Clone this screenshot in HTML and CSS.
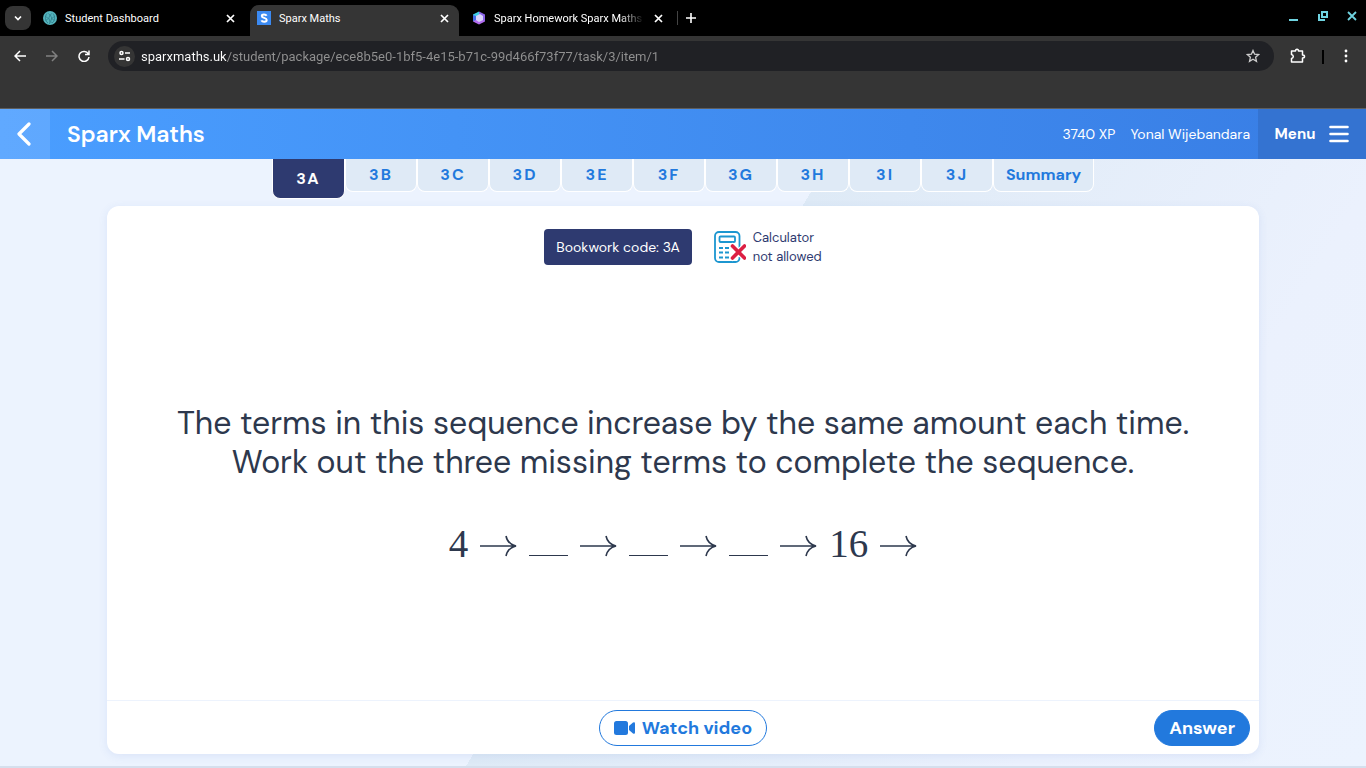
FILE: index.html
```html
<!DOCTYPE html>
<html lang="en">
<head>
    <meta charset="utf-8">
    <title>Sparx Maths</title>
    <link rel="stylesheet" href="styles.css">
</head>
<body>
    <div class="tab-strip">
        <button class="tab-search" aria-label="Search tabs">
            <svg width="10" height="10" viewBox="0 0 10 10"><path d="M2 3.5l3 3 3-3" fill="none" stroke="#fff" stroke-width="1.7"/></svg>
        </button>
        <div class="browser-tab">
            <svg class="favicon" viewBox="0 0 14 14">
                <circle cx="7" cy="7" r="7" fill="#55b4bd"/>
                <g fill="none" stroke="#27707f" stroke-width=".7">
                    <path d="M4 2.5C1.500 5.500 2 10 5 12M10 2.500c2.500 3 2 7.500-1 9.500M5.500 2.500C8.500 5 5 6 6 8s1 3 .5 5M8.500 2.500C6 5 9.500 6 8.500 8s-1 3 0 4M3 5.500l2 2-2 2M11 5.500l-2 2 2 2"/>
                </g>
            </svg>
            <span class="browser-tab-title">Student Dashboard</span>
            <button class="tab-close" aria-label="Close tab"><svg width="9" height="9" viewBox="0 0 9 9"><path d="M1 1l7 7M8 1l-7 7" stroke="#fff" stroke-width="1.7"/></svg></button>
        </div>
        <div class="browser-tab active">
            <svg class="favicon" viewBox="0 0 14 14">
                <rect width="14" height="14" fill="#3b8af2"/>
                <path d="M9.600 4.700C8.900 3.300 5 2.900 4.800 5c0 2.300 4.900 1.500 4.900 4 0 2.200-4.400 2.200-5.300.4" fill="none" stroke="#fff" stroke-width="2"/>
            </svg>
            <span class="browser-tab-title">Sparx Maths</span>
            <button class="tab-close" aria-label="Close tab"><svg width="9" height="9" viewBox="0 0 9 9"><path d="M1 1l7 7M8 1l-7 7" stroke="#fff" stroke-width="1.7"/></svg></button>
        </div>
        <div class="browser-tab last">
            <svg class="favicon" viewBox="0 0 14 14">
                <path d="M7 .5L1 3.500v7L7 7z" fill="#3fd0e8"/>
                <path d="M7 .5l6 3v7L7 7z" fill="#8a63e8"/>
                <path d="M1 10.500l6 3 6-3L7 5z" fill="#b36df0"/>
                <path d="M4 5l4-2 3 2v4l-4 2-3-2z" fill="#d9d4fb"/>
                <path d="M1 4l3 1v4l-3 1z" fill="#456be8"/>
            </svg>
            <span class="browser-tab-title fade">Sparx Homework Sparx Maths</span>
            <button class="tab-close" aria-label="Close tab"><svg width="9" height="9" viewBox="0 0 9 9"><path d="M1 1l7 7M8 1l-7 7" stroke="#fff" stroke-width="1.7"/></svg></button>
        </div>
        <button class="new-tab" aria-label="New tab"><svg width="10" height="10" viewBox="0 0 10 10"><path d="M5 0v10M0 5h10" stroke="#fff" stroke-width="1.600"/></svg></button>
        <div class="window-buttons">
            <button aria-label="Minimise"><svg width="10" height="10" viewBox="0 0 10 10"><path d="M0 9h9" stroke="#6fd3e0" stroke-width="2"/></svg></button>
            <button aria-label="Restore"><svg width="10" height="10" viewBox="0 0 10 10"><path d="M4 1h5v5H4zM1 3v6h6" fill="none" stroke="#6fd3e0" stroke-width="2"/></svg></button>
            <button aria-label="Close window"><svg width="10" height="10" viewBox="0 0 10 10"><path d="M1 1l8 8M9 1L1 9" stroke="#6fd3e0" stroke-width="1.800"/></svg></button>
        </div>
    </div>

    <div class="toolbar">
        <button aria-label="Back"><svg width="12" height="12" viewBox="0 0 12 12"><path d="M12 6H1.500M6 1L1 6l5 5" fill="none" stroke="#fff" stroke-width="1.500"/></svg></button>
        <button aria-label="Forward"><svg width="12" height="12" viewBox="0 0 12 12"><path d="M0 6h10.500M6 1l5 5-5 5" fill="none" stroke="#818181" stroke-width="1.500"/></svg></button>
        <button aria-label="Reload"><svg width="12" height="12" viewBox="0 0 12 12"><path d="M10.300 3.800A5 5 0 1 0 11 7M11 .5v4H7" fill="none" stroke="#fff" stroke-width="1.500"/></svg></button>
        <div class="omnibox">
            <button class="site-info" aria-label="Site information">
                <svg width="12" height="12" viewBox="0 0 12 12"><g fill="none" stroke="#fff" stroke-width="1.500"><circle cx="2.500" cy="3" r="1.500"/><path d="M6 3h5M0 9h5.500"/><circle cx="9" cy="9" r="1.500"/></g></svg>
            </button>
            <input class="url" type="text" aria-label="Address" value="sparxmaths.uk/student/package/ece8b5e0-1bf5-4e15-b71c-99d466f73f77/task/3/item/1">
            <button class="bookmark" aria-label="Bookmark"><svg width="14" height="14" viewBox="0 0 14 14"><path d="M7 1.500l1.600 3.700 4 .4-3 2.700.9 4L7 10.200l-3.500 2.100.9-4-3-2.700 4-.4z" fill="none" stroke="#ccc" stroke-width="1.300"/></svg></button>
        </div>
        <button class="extensions" aria-label="Extensions"><svg width="16" height="16" viewBox="0 0 16 16"><path d="M1.500 3h4c0-2.500 3-2.500 3 0h4v4c2.700 0 2.700 3 0 3v4h-11v-3.500c2.400-.5 2.400-3.500 0-4z" fill="none" stroke="#fff" stroke-width="1.500" stroke-linejoin="round"/></svg></button>
        <span class="divider"></span>
        <button aria-label="Browser menu"><svg width="4" height="14" viewBox="0 0 4 14" fill="#fff"><circle cx="2" cy="2" r="1.400"/><circle cx="2" cy="7" r="1.400"/><circle cx="2" cy="12" r="1.400"/></svg></button>
    </div>

    <header class="header">
        <button class="back" aria-label="Back to package"><svg width="16" height="26" viewBox="0 0 16 26"><path d="M12 3L2 13l10 10" fill="none" stroke="#fff" stroke-width="3.200" stroke-linecap="round" stroke-linejoin="round"/></svg></button>
        <a class="logo" href="#">Sparx Maths</a>
        <span class="xp">3740 XP</span>
        <span class="student">Yonal Wijebandara</span>
        <button class="menu">Menu
            <svg width="20" height="18" viewBox="0 0 20 18"><path d="M1.500 2h17M1.500 9h17M1.500 16h17" stroke="#fff" stroke-width="2.600" stroke-linecap="round"/></svg>
        </button>
    </header>

    <main class="page">
        <nav class="tasks">
            <a class="current" href="#">3A</a>
            <a href="#">3B</a>
            <a href="#">3C</a>
            <a href="#">3D</a>
            <a href="#">3E</a>
            <a href="#">3F</a>
            <a href="#">3G</a>
            <a href="#">3H</a>
            <a href="#">3I</a>
            <a href="#">3J</a>
            <a class="summary" href="#">Summary</a>
        </nav>

        <section class="card">
            <div class="info">
                <div class="bookwork">Bookwork code: 3A</div>
                <div class="calculator">
                    <svg width="32" height="32" viewBox="0 0 32 32">
                        <g fill="none" stroke="#1c96d0" stroke-width="1.800">
                            <rect x="1" y="1" width="24.500" height="30" rx="4"/>
                            <rect x="5.500" y="5.500" width="15.500" height="5.500" rx="1"/>
                            <path d="M5 17h4M11 17h4M17 17h4M5 21.500h4M11 21.500h4M5 26.500h4M11 26.500h4M17 26.500h2" stroke-width="2"/>
                        </g>
                        <path d="M18.500 15l12 12M30.500 15l-12 12" stroke="#fff" stroke-width="6" stroke-linecap="round"/>
                        <path d="M18.500 15l12 12M30.500 15l-12 12" stroke="#dc1f43" stroke-width="3.600" stroke-linecap="round"/>
                    </svg>
                    <span>Calculator<br>not allowed</span>
                </div>
            </div>

            <div class="question">
                <p>The terms in this sequence increase by the same amount each time.<br>Work out the three missing terms to complete the sequence.</p>
                <div class="sequence">
                    <span>4</span>
                    <svg class="arrow" viewBox="0 0 37 22"><path d="M0 11h36M26 1c1 5 4 8.500 10 10-6 1.500-9 5-10 10"/></svg>
                    <span class="blank"></span>
                    <svg class="arrow" viewBox="0 0 37 22"><path d="M0 11h36M26 1c1 5 4 8.500 10 10-6 1.500-9 5-10 10"/></svg>
                    <span class="blank"></span>
                    <svg class="arrow" viewBox="0 0 37 22"><path d="M0 11h36M26 1c1 5 4 8.500 10 10-6 1.500-9 5-10 10"/></svg>
                    <span class="blank"></span>
                    <svg class="arrow" viewBox="0 0 37 22"><path d="M0 11h36M26 1c1 5 4 8.500 10 10-6 1.500-9 5-10 10"/></svg>
                    <span>16</span>
                    <svg class="arrow" viewBox="0 0 37 22"><path d="M0 11h36M26 1c1 5 4 8.500 10 10-6 1.500-9 5-10 10"/></svg>
                </div>
            </div>

            <footer class="actions">
                <button class="video">
                    <svg width="21" height="14" viewBox="0 0 21 14" fill="#2279dd"><rect width="14" height="14" rx="2.500"/><path d="M15 5l4-3.500q2-1 2 1v9q0 2-2 1L15 9z"/></svg>
                    Watch video
                </button>
                <button class="answer">Answer</button>
            </footer>
        </section>
    </main>
</body>
</html>
```
FILE: styles.css
```css
* {
    box-sizing: border-box;
}

body {
    margin: 0;
    min-height: 100vh;
    display: flex;
    flex-direction: column;
    font-family: "DM Sans", Inter, sans-serif;
    color: #2d384d;
}

button {
    padding: 0;
    border: none;
    background: none;
    font-family: inherit;
    color: inherit;
    cursor: pointer;
    display: flex;
    align-items: center;
    justify-content: center;
}

a {
    text-decoration: none;
}

/* browser frame */
.tab-strip {
    height: 36px;
    display: flex;
    align-items: flex-end;
    background: #000;
    color: #fff;
    font-family: Roboto, sans-serif;
    font-size: 11px;
}

.tab-search {
    width: 26px;
    height: 24px;
    margin: 0 5px 6px;
    border-radius: 8px;
    background: #353535;
}

.browser-tab {
    width: 214px;
    height: 31px;
    padding: 0 14px 5px 7px;
    display: flex;
    align-items: center;
    gap: 8px;
    border-radius: 9px 9px 0 0;
}

.browser-tab.active {
    width: 209px;
    padding-right: 9px;
    background: #353535;
}

.browser-tab.last {
    width: 218px;
    padding: 0 13px 5px;
}

.favicon {
    width: 14px;
    height: 14px;
    flex-shrink: 0;
}

.browser-tab-title {
    flex: 1;
    overflow: hidden;
    white-space: nowrap;
}

.fade {
    mask-image: linear-gradient(to right, #000 84%, transparent);
}

.tab-close {
    width: 12px;
    height: 14px;
}

.new-tab {
    height: 14px;
    margin-bottom: 11px;
    padding-left: 8px;
    border-left: 1px solid #444;
}

.window-buttons {
    margin: 0 9px 15px auto;
    display: flex;
    gap: 19px;
}

.toolbar {
    height: 73px;
    padding: 5px 18px 0 14px;
    display: flex;
    align-items: flex-start;
    gap: 20px;
    background: #353535;
    border-bottom: 1px solid #5e5e5e;
}

.toolbar button {
    height: 30px;
}

.omnibox {
    flex: 1;
    height: 30px;
    margin-left: -2px;
    padding: 0 14px 0 6px;
    display: flex;
    align-items: center;
    border-radius: 15px;
    background: #202125;
}

.toolbar .site-info {
    width: 21px;
    height: 21px;
    border-radius: 50%;
    background: #353535;
}

.url {
    flex: 1;
    padding: 0 6px;
    border: none;
    outline: none;
    font-family: Roboto, sans-serif;
    font-size: 13px;
    color: transparent;
    /* host is white, the path is grey */
    background: linear-gradient(to right, #fff 92px, #919191 92px);
    background-clip: text;
}

.extensions {
    margin-left: -4px;
}

.divider {
    width: 2px;
    height: 14px;
    margin: 9px 0 0 -4px;
    background: #000;
}

/* app header */
.header {
    height: 50px;
    display: flex;
    align-items: center;
    background: linear-gradient(to right, #4a9eff, #387de4);
    color: #fff;
    font-size: 14px;
}

.back {
    width: 50px;
    height: 50px;
    background: rgba(255, 255, 255, 0.12);
}

.logo {
    margin: 0 auto 0 17px;
    color: #fff;
    font-size: 23px;
    font-weight: 600;
}

.student {
    margin: 0 8px 0 15px;
}

.menu {
    width: 108px;
    height: 50px;
    gap: 14px;
    background: #3473d1;
    font-size: 15px;
    font-weight: 700;
}

/* task page */
.page {
    flex: 1;
    display: flex;
    flex-direction: column;
    align-items: center;
    padding: 0 107px 12px;
    background: linear-gradient(121deg, #ecf3fe 48%, #deeaf6 48%, #ebf1fd 80%, #ecf3fe);
    border-bottom: 2px solid #d5dfed;
}

.tasks {
    height: 47px;
    display: flex;
    align-items: flex-start;
}

.tasks a {
    width: 72px;
    height: 33px;
    border: 1px solid #fff;
    border-top: none;
    border-radius: 0 0 8px 8px;
    background: #dfeaf6;
    color: #2279dd;
    font-size: 16px;
    font-weight: 700;
    line-height: 32px;
    letter-spacing: 2px;
    text-align: center;
}

.tasks .current {
    width: 73px;
    height: 40px;
    background: #2e3a70;
    color: #fff;
    line-height: 40px;
}

.tasks .summary {
    width: 101px;
    letter-spacing: 0;
}

.card {
    width: 100%;
    flex: 1;
    display: flex;
    flex-direction: column;
    border-radius: 12px;
    background: #fff;
    box-shadow: 0 2px 10px rgba(60, 100, 200, 0.1);
}

.info {
    padding-top: 22px;
    display: flex;
    justify-content: center;
    align-items: flex-start;
    gap: 22px;
    color: #2e3a70;
}

.bookwork {
    margin-top: 1px;
    padding: 0 12px;
    border-radius: 4px;
    background: #2e3a70;
    color: #fff;
    font-size: 14px;
    line-height: 36px;
}

.calculator {
    display: flex;
    align-items: center;
    gap: 7px;
    font-size: 13px;
    line-height: 19px;
}

.question {
    flex: 1;
    padding-top: 3px;
    display: flex;
    flex-direction: column;
    align-items: center;
    justify-content: center;
    text-align: center;
}

.question p {
    margin: 0 0 40px;
    font-size: 32px;
    line-height: 39px;
}

.sequence {
    display: flex;
    align-items: center;
    gap: 12px;
    font-family: "Liberation Serif", serif;
    font-size: 39px;
    line-height: 44px;
}

.arrow {
    width: 37px;
    height: 22px;
    margin-top: 5px;
    fill: none;
    stroke: #2d384d;
    stroke-width: 1.6;
}

.blank {
    width: 39px;
    height: 24px;
    border-bottom: 1px solid #2d384d;
}

.actions {
    padding: 9px 9px 8px;
    display: grid;
    grid-template-columns: 1fr auto 1fr;
    border-top: 1px solid #edf3fd;
}

.actions button {
    height: 36px;
    padding: 0 14px 1px;
    border: 1px solid #2279dd;
    border-radius: 18px;
    font-size: 18px;
    font-weight: 700;
}

.video {
    grid-column: 2;
    gap: 7px;
    color: #2279dd;
}

.answer {
    justify-self: end;
    background: #2279dd;
    color: #fff;
}
```
